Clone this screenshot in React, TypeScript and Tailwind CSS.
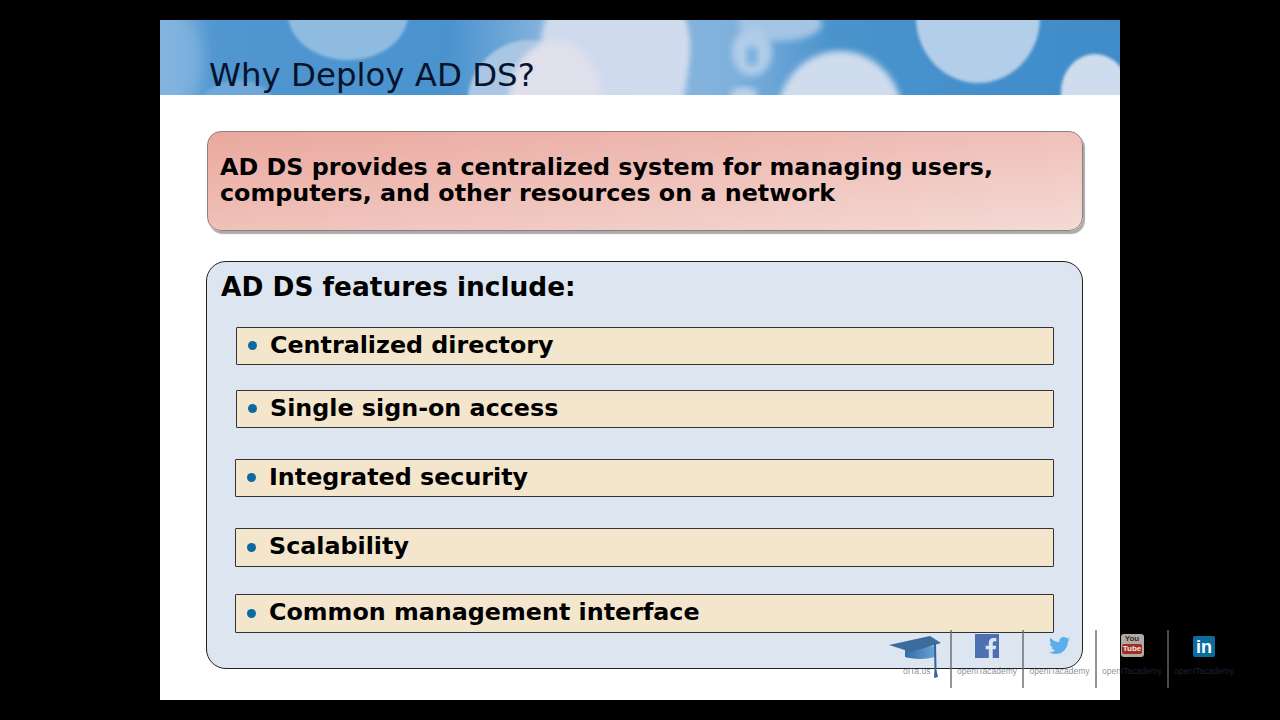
import React from "react";
import { FaFacebookF, FaTwitter } from "react-icons/fa";

const font = "font-['DejaVu_Sans',sans-serif]";

function Banner() {
  return (
    <svg className="block w-full h-full" viewBox="0 0 960 75" preserveAspectRatio="none">
      <defs>
        <linearGradient id="base" x1="0" y1="0" x2="1" y2="0">
          <stop offset="0" stopColor="#74aad9" />
          <stop offset="0.06" stopColor="#5096d0" />
          <stop offset="0.3" stopColor="#4a93cf" />
          <stop offset="0.42" stopColor="#8fb9df" />
          <stop offset="0.6" stopColor="#7fb0dc" />
          <stop offset="0.7" stopColor="#4a93cd" />
          <stop offset="1" stopColor="#3f8cc9" />
        </linearGradient>
        <filter id="b2"><feGaussianBlur stdDeviation="1.5" /></filter>
        <filter id="b3"><feGaussianBlur stdDeviation="3" /></filter>
        <filter id="b6"><feGaussianBlur stdDeviation="7" /></filter>
      </defs>
      <rect width="960" height="75" fill="url(#base)" />
      <ellipse cx="0" cy="40" rx="42" ry="60" fill="#8dbce2" opacity="0.6" filter="url(#b6)" />
      <ellipse cx="188" cy="-6" rx="60" ry="46" fill="#8fbbe0" filter="url(#b2)" />
      <ellipse cx="78" cy="92" rx="40" ry="32" fill="#7db1dc" opacity="0.7" filter="url(#b2)" />
      <ellipse cx="370" cy="85" rx="63" ry="65" fill="#a9c6e4" filter="url(#b2)" />
      <ellipse cx="455" cy="25" rx="74" ry="75" fill="#cfdbed" filter="url(#b3)" />
      <ellipse cx="395" cy="80" rx="46" ry="59" fill="#e0dfec" filter="url(#b3)" />
      <ellipse cx="500" cy="40" rx="28" ry="70" fill="#d0dbee" filter="url(#b3)" />
      <ellipse cx="620" cy="4" rx="42" ry="17" fill="#a4c5e4" filter="url(#b3)" />
      <ellipse cx="592" cy="32" rx="20" ry="24" fill="#b0cce8" filter="url(#b3)" />
      <ellipse cx="592" cy="36" rx="6" ry="10" fill="#78aedb" filter="url(#b3)" />
      <ellipse cx="584" cy="76" rx="14" ry="9" fill="#bcd2ea" filter="url(#b3)" />
      <ellipse cx="680" cy="98" rx="63" ry="67" fill="#cfdcee" filter="url(#b3)" />
      <ellipse cx="818" cy="-2" rx="62" ry="65" fill="#b2cee8" filter="url(#b2)" />
      <ellipse cx="935" cy="72" rx="34" ry="38" fill="#cfdcee" filter="url(#b2)" />
    </svg>
  );
}

function Row({ text, cls }: { text: string; cls: string }) {
  return (
    <div className={`flex items-center bg-[#f3e6cd] border border-[#333] rounded-[1px] ${cls}`}>
      <span className="w-[9px] h-[9px] rounded-full bg-[#0b6aa2] ml-[11px] mr-[13px] mb-[1px] shrink-0" />
      <span className="text-[23.8px] leading-[30px] font-bold text-black mb-[3px]">{text}</span>
    </div>
  );
}

function Caption({ text }: { text: string }) {
  return (
    <span className="text-[8.5px] leading-[10px] text-[#303a5c]/60 font-['Liberation_Sans',sans-serif] whitespace-nowrap">
      {text}
    </span>
  );
}

function Cap() {
  return (
    <svg width="54" height="44" viewBox="0 0 54 44">
      <defs>
        <linearGradient id="capg" x1="0" y1="0" x2="1" y2="0">
          <stop offset="0" stopColor="#2f6ea8" />
          <stop offset="1" stopColor="#6aa2d4" />
        </linearGradient>
      </defs>
      <path d="M16 12 L16 21 C22 23 36 24 46 21 L46 10 Z" fill="url(#capg)" />
      <path d="M0 9 L41 0 L52 7 L22 16 Z" fill="#3c6c9c" />
      <path d="M45 7 L47 7 L47.500 34 L49 41 L45 42 L45.500 34 Z" fill="#31659a" />
    </svg>
  );
}

const Bar = () => <div className="w-[2px] bg-[#666]/70" />;

export default function App() {
  return (
    <div className={`relative w-[1280px] h-[720px] overflow-hidden bg-black py-[20px] px-[160px] ${font}`}>
      <div className="flex flex-col w-[960px] h-[680px] bg-white">
        <header className="relative h-[75px] shrink-0">
          <Banner />
          <h1 className="absolute left-[49px] top-[36px] text-[32.4px] leading-[38px] font-normal text-[#06132b]">
            Why Deploy AD DS?
          </h1>
        </header>

        <section className="ml-[47px] mr-[37px] mt-[36px] h-[100px] shrink-0 rounded-[14px] border border-[#8f7f7d] bg-gradient-to-br from-[#eaa89e] to-[#f4dad6] shadow-[2px_3px_1px_#aaa] pl-[12px] pt-[22px]">
          <p className="text-[23.8px] leading-[26px] font-bold text-black whitespace-nowrap">
            AD DS provides a centralized system for managing users,
            <br />
            computers, and other resources on a network
          </p>
        </section>

        <section className="ml-[46px] mr-[37px] mt-[30px] h-[408px] shrink-0 rounded-[20px] border border-[#222] bg-[#dde5f1] pl-[28px] pr-[28px]">
          <h2 className="ml-[-14px] mt-[8px] text-[26.4px] leading-[34px] font-bold text-black">AD DS features include:</h2>
          <Row text="Centralized directory" cls="h-[38px] ml-[1px] mt-[23px]" />
          <Row text="Single sign-on access" cls="h-[38px] ml-[1px] mt-[25px]" />
          <Row text="Integrated security" cls="h-[38px] mt-[31px]" />
          <Row text="Scalability" cls="h-[39px] mt-[31px]" />
          <Row text="Common management interface" cls="h-[39px] mt-[27px]" />
        </section>
      </div>

      {/* Watermark of social links, lying over the slide */}
      <div className="absolute left-[889px] top-[630px] w-[350px] h-[58px] flex">
        <div className="w-[61px] relative">
          <div className="absolute left-0 top-[6px]"><Cap /></div>
          <span className="absolute left-[14px] top-[36px] flex"><Caption text="oITa.us" /></span>
        </div>
        <Bar />
        <div className="w-[70px] flex flex-col items-center">
          <div className="h-[36px] pt-[4px]">
            <div className="w-[24px] h-[24px] bg-[#4d70b2] flex items-end justify-end overflow-hidden">
              <FaFacebookF className="w-[20px] h-[20px] text-[#dde5f1] mr-[-2px]" />
            </div>
          </div>
          <Caption text="openITacademy" />
        </div>
        <Bar />
        <div className="w-[71px] flex flex-col items-center">
          <div className="h-[36px] pt-[5px]">
            <FaTwitter className="w-[21px] h-[21px] text-[#5aaeea]" />
          </div>
          <Caption text="openITacademy" />
        </div>
        <Bar />
        <div className="w-[70px] flex flex-col items-center">
          <div className="h-[36px] pt-[4px]">
            <div className="w-[23px] h-[23px] rounded-[3px] bg-[#b0aaa4] flex flex-col items-center overflow-hidden font-['Liberation_Sans',sans-serif] font-bold text-[8px] leading-[10px]">
              <span className="text-[#3a2a20]">You</span>
              <span className="bg-[#a52a20] text-[#eee] rounded-[2px] px-[1px]">Tube</span>
            </div>
          </div>
          <Caption text="openITacademy" />
        </div>
        <Bar />
        <div className="w-[70px] flex flex-col items-center">
          <div className="h-[36px] pt-[6px]">
            <div className="w-[22px] h-[21px] rounded-[2px] bg-[#0c6c9e] flex items-center justify-center font-['Liberation_Sans',sans-serif] font-bold text-[18px] leading-[20px] text-white">
              in
            </div>
          </div>
          <Caption text="openITacademy" />
        </div>
      </div>
    </div>
  );
}
